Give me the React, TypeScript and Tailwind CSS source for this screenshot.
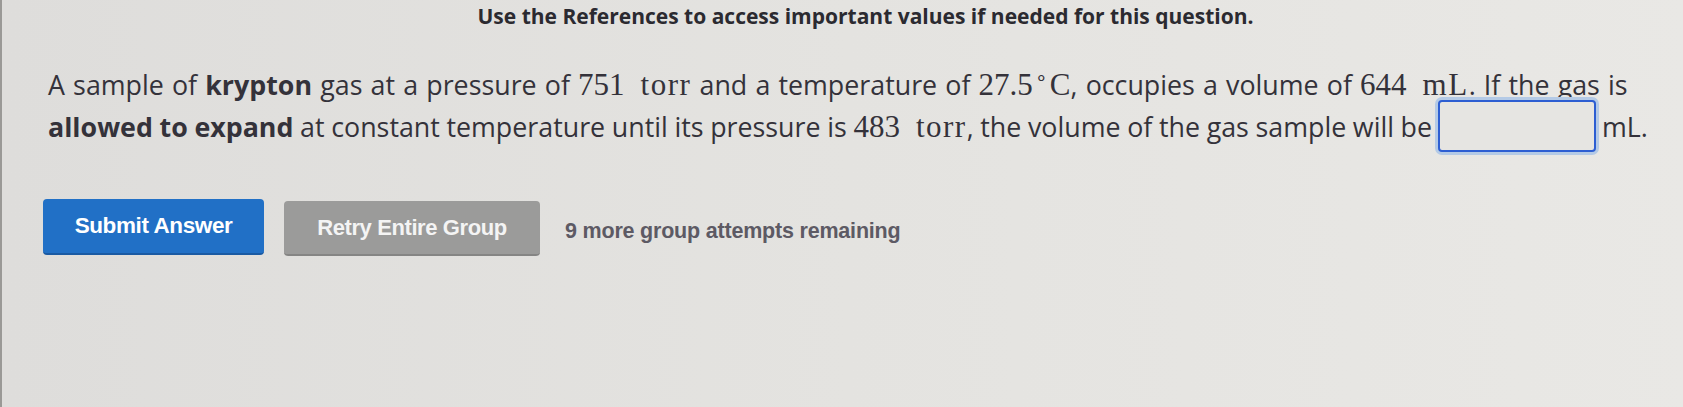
function M({ children }: { children: React.ReactNode }) {
  return <span className="font-['Liberation_Serif',serif] text-[31px]">{children}</span>;
}

function Unit({ children }: { children: React.ReactNode }) {
  return <span className="ml-[16px] font-['Liberation_Serif',serif] text-[31px] tracking-[1.5px]">{children}</span>;
}

export default function App() {
  return (
    <main className="min-h-screen w-full overflow-hidden border-l-2 border-[#9a9996] bg-gradient-to-r from-[#dedddb] via-[#e4e3e0] to-[#e9e8e5] font-['Open_Sans',sans-serif] text-[#34323a]">
      <p className="pl-[46px] pt-[2px] text-center text-[21px] font-bold leading-[28px] text-[#2b2a30]">
        Use the References to access important values if needed for this question.
      </p>

      <div className="mt-[34px] pl-[46px] text-[26.8px] leading-[42px]">
        <div className="whitespace-nowrap [word-spacing:1.2px]">
          A sample of <b className="font-bold">krypton</b> gas at a pressure of <M>751</M>
          <Unit>torr</Unit> and a temperature of{" "}
          <M>
            27.5<sup className="ml-[2px] text-[20px]">∘</sup>
            <span className="ml-[2px]">C</span>
          </M>
          , occupies a volume of <M>644</M>
          <Unit>mL</Unit>. If the gas is
        </div>
        <div className="whitespace-nowrap [word-spacing:-0.3px]">
          <b className="font-bold">allowed to expand</b> at constant temperature until its pressure is <M>483</M>
          <Unit>torr</Unit>, the volume of the gas sample will be
          <span className="mx-[6px] -mt-[8px] inline-block h-[52px] w-[158px] rounded-[4px] border-2 border-[#2d5ed2] bg-[#e6e5e2] align-[-15px] ring-[3px] ring-[#b4cae6]" />
          mL.
        </div>
      </div>

      <div className="mt-[45px] flex items-center pl-[41px] font-['Liberation_Sans',Arial,sans-serif] font-bold">
        <button className="h-[56px] w-[221px] rounded-[4px] border-b-2 border-[#1a5aa3] bg-[#2170c6] text-[22.5px] tracking-[-0.4px] text-white">
          Submit Answer
        </button>
        <button className="ml-[20px] mt-[4px] h-[55px] w-[256px] rounded-[4px] border-b-2 border-[#858584] bg-[#9b9b9a] text-[22px] tracking-[-0.4px] text-[#f4f4f4]">
          Retry Entire Group
        </button>
        <span className="ml-[25px] mt-[10px] text-[21.5px] tracking-[-0.2px] text-[#5d5a64]">9 more group attempts remaining</span>
      </div>
    </main>
  );
}
